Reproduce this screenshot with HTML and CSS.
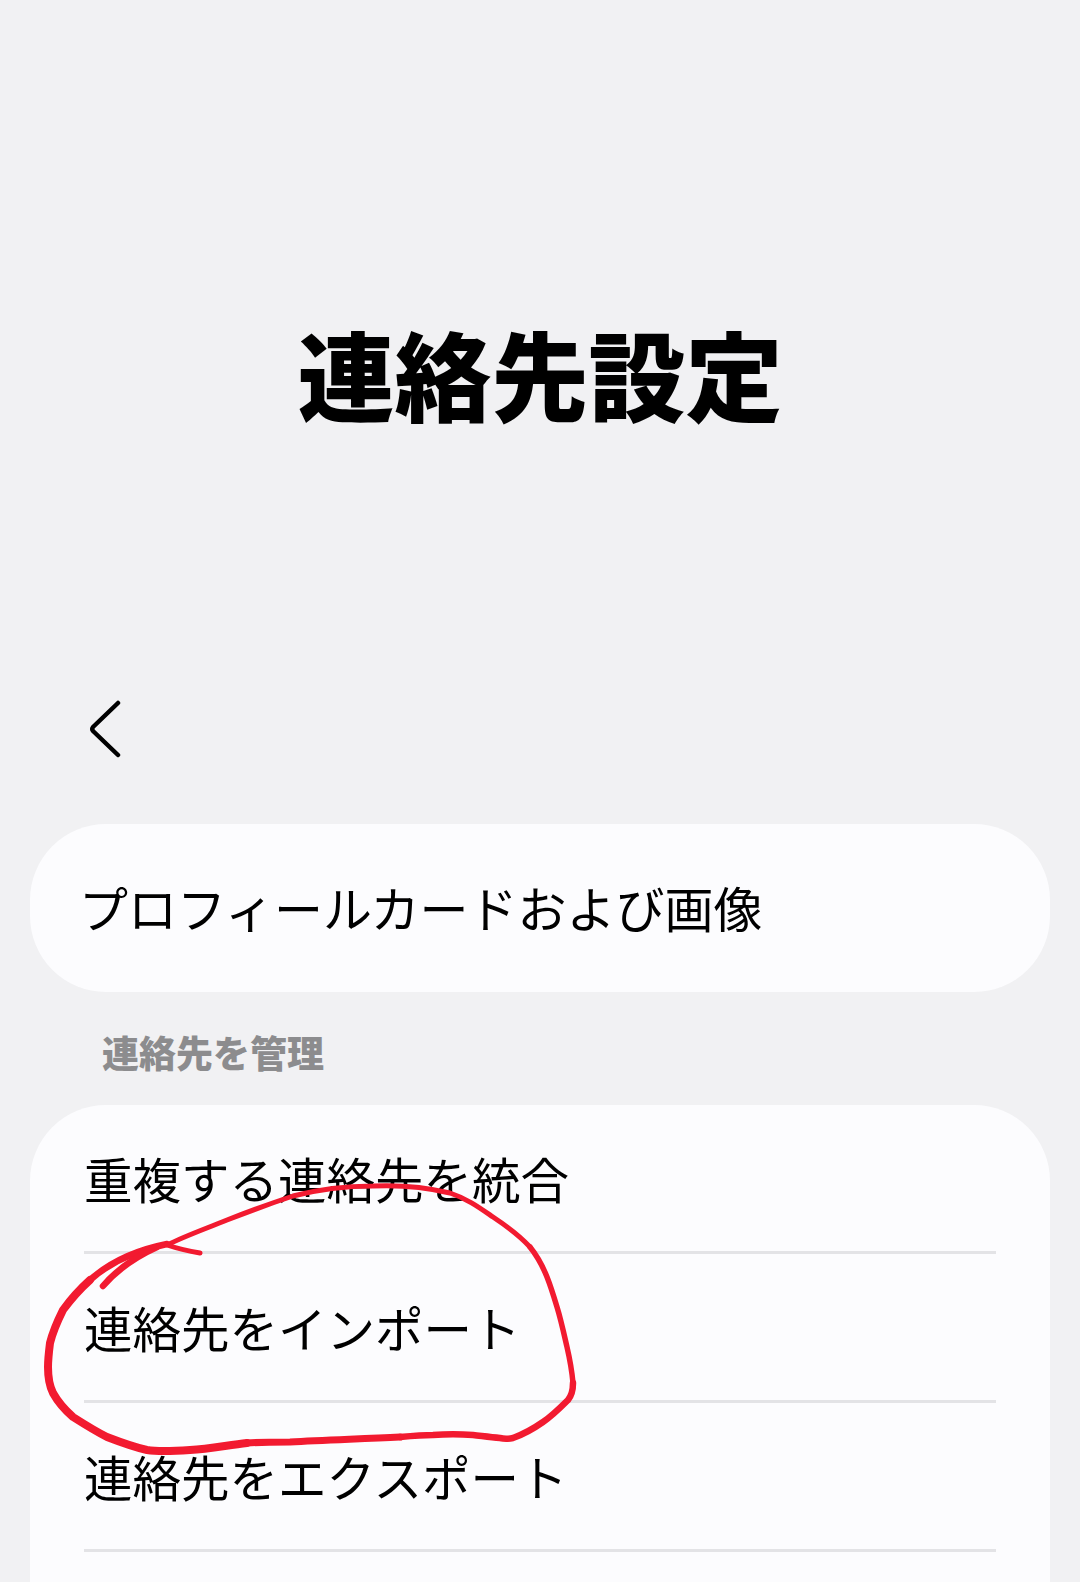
FILE: index.html
```html
<!DOCTYPE html>
<html lang="ja">
<head>
<meta charset="utf-8">
<title>連絡先設定</title>
<link rel="stylesheet" href="styles.css">
</head>
<body>
<main class="page">
  <header class="hero"><h1 class="title">連絡先設定</h1></header>
  <nav class="toolbar">
    <svg class="back" viewBox="0 0 32 58" aria-hidden="true"><path d="M29 3 L4 27 Q2.500 29 4 31 L29 55"/></svg>
  </nav>
  <section class="card card-single"><div class="row row-tall">プロフィールカードおよび画像</div></section>
  <h2 class="section-label">連絡先を管理</h2>
  <section class="card">
    <div class="row">重複する連絡先を統合</div>
    <div class="row">連絡先をインポート</div>
    <div class="row">連絡先をエクスポート</div>
    <div class="row"></div>
  </section>
  <svg class="scribble" viewBox="0 0 1080 1582" aria-hidden="true">
    <path class="stroke-thin" d="M200 1253 C188 1251 176 1248 167 1245 C185 1236 205 1229 227 1220 C250 1211 272 1203 293 1196 C320 1189 345 1186 373 1186 C395 1185 425 1187 450 1193 C468 1199 480 1208 493 1217 C508 1227 520 1236 530 1247"/>
    <path class="stroke-mid" d="M530 1247 C538 1257 543 1267 547 1277 C551 1287 554 1297 557 1307 C561 1320 564 1334 567 1347 C570 1360 572 1372 573 1383"/>
    <path class="stroke-wide" d="M573 1383 C573 1390 572 1395 568 1400 C560 1408 552 1416 543 1422 C533 1429 524 1434 513 1438 C508 1439 504 1439 500 1438 C490 1437 482 1436 473 1435 C460 1434 446 1434 433 1435 C422 1435 411 1436 400 1437"/>
    <path class="stroke-broad" d="M400 1437 C360 1439 325 1440 290 1442 C275 1442 260 1442 247 1443"/>
    <path class="stroke-heavy" d="M247 1443 C228 1445 210 1449 190 1450 C175 1451 160 1452 147 1450 C133 1447 120 1442 107 1437 C95 1431 84 1424 73 1417 C65 1410 58 1402 53 1393 C49 1385 48 1376 48 1367 C48 1359 49 1351 50 1343 C53 1331 58 1320 63 1310 C71 1299 80 1289 90 1280"/>
    <path class="stroke-wide" d="M90 1280 C108 1264 132 1251 167 1244"/>
    <path class="stroke-wide" d="M103 1286 C115 1272 135 1257 157 1247"/>
  </svg>
</main>
</body>
</html>
```
FILE: styles.css
```css
* { box-sizing: border-box; }
html, body { margin: 0; padding: 0; }
body {
  background: #f1f1f3;
  color: #000;
  font-family: "Noto Sans CJK JP", "Liberation Sans", sans-serif;
}
.page {
  position: relative;
  width: 1080px;
  height: 1582px;
  overflow: hidden;
  padding: 0 30px;
}
.hero {
  height: 696px;
  padding-top: 48px;
  display: flex;
  align-items: center;
  justify-content: center;
}
.title {
  margin: 0;
  font-size: 97px;
  line-height: 1.2;
  font-weight: 900;
}
.toolbar {
  height: 128px;
  padding: 4px 0 0 59px;
}
.back {
  display: block;
  width: 32px;
  height: 58px;
  fill: none;
  stroke: #000;
  stroke-width: 4.500px;
  stroke-linecap: round;
  stroke-linejoin: round;
}
.card {
  background: #fcfcfe;
  border-radius: 76px;
}
.card-single { height: 168px; }
.row {
  height: 149px;
  margin: 0 54px;
  display: flex;
  align-items: center;
  font-size: 48.500px;
  line-height: 1;
  border-bottom: 3px solid #e3e3e6;
}
.row-tall {
  height: 168px;
  margin-left: 49px;
  border-bottom: 0;
  padding-bottom: 4px;
  font-size: 49px;
}
.section-label {
  margin: 0;
  height: 113px;
  padding: 36px 0 0 72px;
  font-size: 37px;
  line-height: 48px;
  font-weight: 900;
  color: #8c8c8e;
}
.scribble {
  position: absolute;
  left: 0;
  top: 0;
  width: 1080px;
  height: 1582px;
  fill: none;
  stroke: #f21a30;
  stroke-linecap: round;
  stroke-linejoin: round;
  pointer-events: none;
}
.stroke-thin { stroke-width: 5px; }
.stroke-mid { stroke-width: 5.500px; }
.stroke-wide { stroke-width: 6.500px; }
.stroke-broad { stroke-width: 7.200px; }
.stroke-heavy { stroke-width: 8px; }
```
